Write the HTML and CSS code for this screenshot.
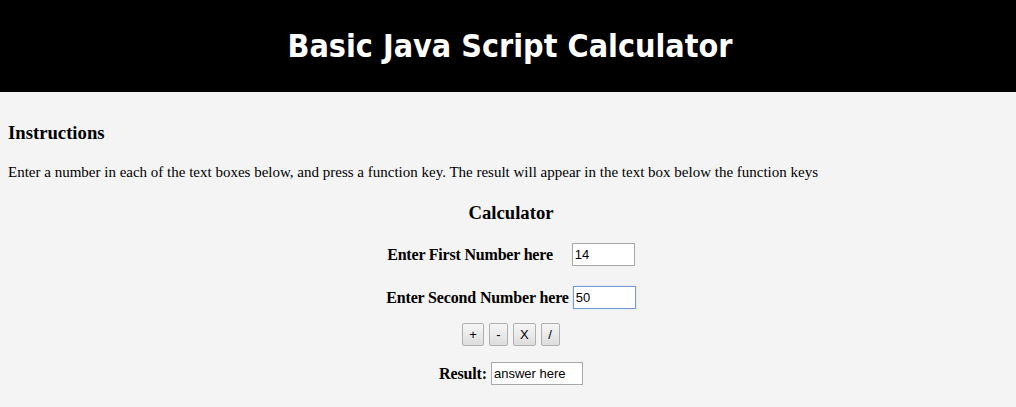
FILE: index.html
```html
<!DOCTYPE html>
<html lang="en">
<head>
  <meta charset="UTF-8">
  <title>Basic Java Script Calculator</title>
  <link rel="stylesheet" href="styles.css">
</head>
<body>
  <div class="header">
    <h1>Basic Java Script Calculator</h1>
  </div>
  <div class="content">
    <h3>Instructions</h3>
    <p>Enter a number in each of the text boxes below, and press a function key. The result will appear in the text box below the function keys</p>
    <div class="calc">
      <h3 class="calc-title">Calculator</h3>
      <div class="row">
        <label class="first">Enter First Number here</label>
        <input type="text" id="num1" class="num" value="14">
      </div>
      <div class="row">
        <label>Enter Second Number here</label>
        <input type="text" id="num2" class="num focused" value="50">
      </div>
      <div class="row keys">
        <button onclick="calc('+')">+</button>
        <button onclick="calc('-')">-</button>
        <button onclick="calc('x')">X</button>
        <button onclick="calc('/')">/</button>
      </div>
      <div class="row">
        <label>Result:</label>
        <input type="text" id="result" class="answer" value="answer here">
      </div>
    </div>
  </div>

  <script>
    function calc(op) {
      var a = parseFloat(document.getElementById('num1').value) || 0;
      var b = parseFloat(document.getElementById('num2').value) || 0;
      var r = 0;
      if (op == '+') r = a + b;
      if (op == '-') r = a - b;
      if (op == 'x') r = a * b;
      if (op == '/') r = a / b;
      document.getElementById('result').value = r;
    }
  </script>
</body>
</html>
```

FILE: styles.css
```css
body {
  margin: 0;
  background-color: #f4f4f4;
  font-family: "Liberation Serif", "Times New Roman", serif;
  font-size: 16px;
  color: #000000;
}
.header {
  background-color: #000000;
  height: 92px;
  display: flex;
  align-items: center;
  justify-content: center;
}
.header h1 {
  margin: 0 0 0 4px;
  color: #ffffff;
  font-family: "DejaVu Sans Condensed", "DejaVu Sans", sans-serif;
  font-stretch: condensed;
  font-weight: bold;
  font-size: 32px;
}
.content {
  padding: 0 8px;
}
h3 {
  font-size: 18.7px;
  margin: 30px 0 20px;
}
p {
  margin: 0;
  font-size: 15px;
}
.calc {
  display: flex;
  flex-direction: column;
  align-items: center;
  padding-left: 6px;
}
.calc .calc-title {
  margin: 21px 0 19px;
}
.row {
  display: flex;
  align-items: center;
  gap: 4px;
  margin-bottom: 20px;
  font-weight: bold;
  letter-spacing: -0.15px;
}
.row .first {
  margin-right: 15px;
  letter-spacing: -0.2px;
}
input {
  font-family: "Liberation Sans", Arial, sans-serif;
  font-size: 13px;
  letter-spacing: 0;
  border: 1px solid #a9a9a9;
  background: #ffffff;
  padding: 2px 2px;
  height: 17px;
}
.num {
  width: 57px;
}
.focused {
  border: 1px solid #7a9cd3;
  box-shadow: 0 0 1px #9cb7e8;
}
.answer {
  width: 86px;
}
.keys {
  gap: 5px;
  margin-top: -6px;
  margin-bottom: 16px;
}
button {
  font-family: "Liberation Sans", Arial, sans-serif;
  font-size: 13px;
  min-width: 19px;
  height: 23px;
  padding: 0 6px;
  border: 1px solid #b0b0b0;
  border-radius: 2px;
  background: linear-gradient(#f6f6f6, #dddddd);
  color: #000000;
}
```
